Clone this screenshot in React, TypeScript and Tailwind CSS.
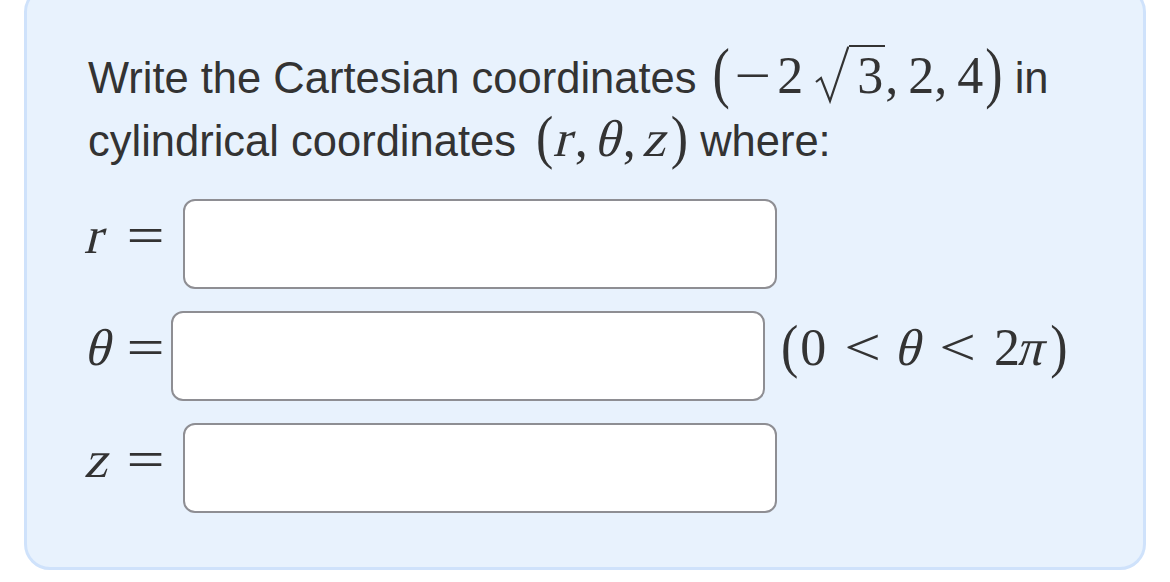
import React from 'react';

const serif = "font-['Liberation_Serif','Times_New_Roman',serif]";

// math italic letter (Liberation Serif italic is slanted by hand)
const I = ({ children, className = '' }: { children: React.ReactNode; className?: string }) => (
  <span className={`inline-block -skew-x-[14deg] ${className}`}>{children}</span>
);

const Paren = ({ children, className }: { children: React.ReactNode; className: string }) => (
  <span className={`inline-block leading-none ${className}`}>{children}</span>
);

const Sqrt3 = () => (
  <>
    <svg width="34" height="58" viewBox="0 0 34 58" className="inline-block align-[-11px] ml-[12px]">
      <path d="M1 36 L6 32 L15 55 L33 1.5 L34 1.5" fill="none" stroke="#333" strokeWidth="2.2" />
    </svg>
    <span className="border-t-2 border-[#333] pl-[8px] pr-[2px]">3</span>
  </>
);

const Field = ({ className }: { className: string }) => (
  <div className={`w-[594px] h-[90px] shrink-0 rounded-[12px] border-2 border-[#8e8e93] bg-white ${className}`} />
);

const Label = ({ v }: { v: string }) => (
  <div className={`flex items-center mb-[16px] ${serif} text-[52px] leading-[52px]`}>
    <span className="w-[40px]"><I>{v}</I></span>
    <span className="w-[35px] text-center inline-block scale-x-[1.3]">=</span>
  </div>
);

export default function App() {
  return (
    <div className="w-[1170px] h-[582px] overflow-hidden bg-white text-[#333] font-['Liberation_Sans',Arial,sans-serif]">
      <div className="ml-[24px] mt-[-14px] w-[1122px] h-[584px] rounded-[26px] border-[3px] border-[#cfe2fb] bg-[#e8f2fd] pl-[61px] pt-[57px]">
        <p className="text-[43.5px] leading-[63px] whitespace-nowrap">
          Write the Cartesian coordinates{' '}
          <span className={`${serif} text-[52px] leading-[0]`}>
            <Paren className="ml-[4px] scale-y-[1.3] -translate-y-[3px]">(</Paren>
            <span className="inline-block leading-none ml-[8px] scale-x-[1.25]">−</span>
            <span className="ml-[10px]">2</span>
            <Sqrt3 />
            <span>,</span>
            <span className="ml-[10px]">2,</span>
            <span className="ml-[10px]">4</span>
            <Paren className="ml-[2px] scale-y-[1.3] -translate-y-[3px]">)</Paren>
          </span>{' '}
          in
          <br />
          cylindrical coordinates{' '}
          <span className={`${serif} text-[52px] leading-[0]`}>
            <Paren className="ml-[8px] scale-y-[1.15] -translate-y-[2px]">(</Paren>
            <I className="ml-[4px]">r</I>,
            <I className="ml-[10px]">θ</I>,
            <I className="ml-[10px]">z</I>
            <Paren className="ml-[2px] scale-y-[1.15] -translate-y-[2px]">)</Paren>
          </span>{' '}
          where:
        </p>
        <div className="mt-[26px] flex flex-col gap-[22px]">
          <div className="flex items-center">
            <Label v="r" />
            <Field className="ml-[20px]" />
          </div>
          <div className="flex items-center">
            <Label v="θ" />
            <Field className="ml-[8px]" />
            <span className={`${serif} text-[52px] leading-[52px] mb-[16px] ml-[16px] whitespace-nowrap`}>
              <Paren className="scale-y-[1.15] -translate-y-[2px]">(</Paren>
              <span className="ml-[2px]">0</span>
              <span className="inline-block ml-[22px] scale-x-[1.25]">&lt;</span>
              <I className="ml-[20px]">θ</I>
              <span className="inline-block ml-[20px] scale-x-[1.25]">&lt;</span>
              <span className="ml-[22px]">2</span>
              <I>π</I>
              <Paren className="ml-[4px] scale-y-[1.15] -translate-y-[2px]">)</Paren>
            </span>
          </div>
          <div className="flex items-center">
            <Label v="z" />
            <Field className="ml-[20px]" />
          </div>
        </div>
      </div>
    </div>
  );
}
